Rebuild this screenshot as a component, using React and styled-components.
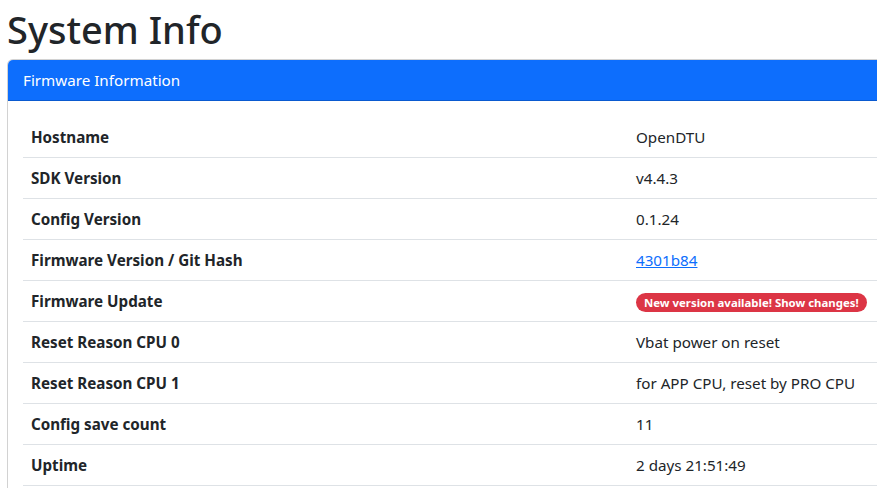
import React from "react";
import styled, { createGlobalStyle } from "styled-components";

const Global = createGlobalStyle`
  html, body { margin: 0; padding: 0; background: #fff; overflow: hidden; }
  body {
    font-family: "Noto Sans", "Open Sans", sans-serif;
    font-size: 15.2px;
    line-height: 24px;
    color: #212529;
  }
`;

const Page = styled.div`
  padding: 0 0 0 7px;
  width: 1100px;
`;

const Title = styled.h1`
  margin: 5px 0 6px;
  font-size: 38px;
  font-weight: 500;
  line-height: 48px;
`;

const Card = styled.div`
  border: 1px solid rgba(0, 0, 0, 0.175);
  border-radius: 6px;
  overflow: hidden;
  background: #fff;
`;

const CardHeader = styled.div`
  background: #0d6efd;
  color: #fff;
  padding: 8px 15px;
  line-height: 24px;
  border-bottom: 1px solid rgba(0, 0, 0, 0.175);
`;

const CardBody = styled.div`
  padding: 16px 15px;
`;

const Table = styled.table`
  width: 100%;
  border-collapse: collapse;
`;

const Row = styled.tr`
  border-bottom: 1px solid #dee2e6;
`;

const Th = styled.th`
  text-align: left;
  font-weight: 700;
  padding: 8px;
  width: 589px;
  line-height: 24px;
`;

const Td = styled.td`
  padding: 8px;
  line-height: 24px;
`;

const Link = styled.a`
  color: #0d6efd;
  text-decoration: underline;
`;

const Badge = styled.span`
  display: inline-block;
  background: #dc3545;
  color: #fff;
  font-size: 11.4px;
  font-weight: 700;
  line-height: 1;
  padding: 4px 8px;
  border-radius: 50rem;
  vertical-align: baseline;
`;

const rows = [
  ["Hostname", "OpenDTU"],
  ["SDK Version", "v4.4.3"],
  ["Config Version", "0.1.24"],
  ["Firmware Version / Git Hash", <Link href="#">4301b84</Link>],
  ["Firmware Update", <Badge>New version available! Show changes!</Badge>],
  ["Reset Reason CPU 0", "Vbat power on reset"],
  ["Reset Reason CPU 1", "for APP CPU, reset by PRO CPU"],
  ["Config save count", "11"],
  ["Uptime", "2 days 21:51:49"],
];

export default function App() {
  return (
    <Page>
      <Global />
      <Title>System Info</Title>
      <Card>
        <CardHeader>Firmware Information</CardHeader>
        <CardBody>
          <Table>
            <tbody>
              {rows.map(([k, v]) => (
                <Row key={k}>
                  <Th>{k}</Th>
                  <Td>{v}</Td>
                </Row>
              ))}
            </tbody>
          </Table>
        </CardBody>
      </Card>
    </Page>
  );
}
